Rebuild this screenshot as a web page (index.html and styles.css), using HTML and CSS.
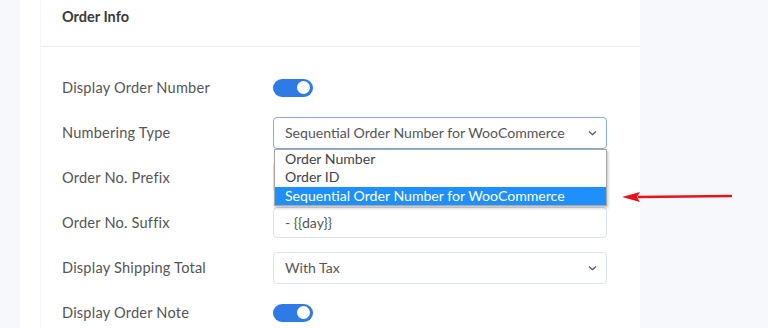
FILE: index.html
```html
<!DOCTYPE html>
<html>
<head>
    <meta charset="utf-8" />
    <meta name="viewport" content="width=device-width,initial-scale=1" />
    <title>Order Info</title>
    <link rel="stylesheet" href="styles.css">
</head>
<body>
    <div class="gutter"></div>
    <div class="panel">
        <div class="card">
            <div class="card-head">Order Info</div>
            <div class="rows">
                <div class="row">
                    <label>Display Order Number</label>
                    <span class="toggle on"><span class="knob"></span></span>
                </div>
                <div class="row">
                    <label>Numbering Type</label>
                    <div class="field select focus">
                        <span>Sequential Order Number for WooCommerce</span>
                        <svg class="chev" width="9" height="6" viewBox="0 0 9 6"><path d="M1 1.5l3.5 3.2 3.5-3.2" fill="none" stroke="#555" stroke-width="1.3"/></svg>
                        <ul class="options">
                            <li>Order Number</li>
                            <li>Order ID</li>
                            <li class="active">Sequential Order Number for WooCommerce</li>
                        </ul>
                    </div>
                </div>
                <div class="row">
                    <label>Order No. Prefix</label>
                    <div class="field"></div>
                </div>
                <div class="row">
                    <label>Order No. Suffix</label>
                    <div class="field"><span>- {{day}}</span></div>
                </div>
                <div class="row">
                    <label>Display Shipping Total</label>
                    <div class="field select">
                        <span>With Tax</span>
                        <svg class="chev" width="9" height="6" viewBox="0 0 9 6"><path d="M1 1.5l3.5 3.2 3.5-3.2" fill="none" stroke="#555" stroke-width="1.3"/></svg>
                    </div>
                </div>
                <div class="row">
                    <label>Display Order Note</label>
                    <span class="toggle on"><span class="knob"></span></span>
                </div>
            </div>
        </div>
    </div>
    <div class="aside"></div>

    <svg class="pointer" width="120" height="14" viewBox="0 0 120 14">
        <path d="M18 7 L112 6" stroke="#e8121a" stroke-width="2.4" fill="none"/>
        <path d="M2 7 L20 2 L17 7 L20 12 Z" fill="#e8121a"/>
    </svg>
</body>
</html>
```

FILE: styles.css
```css
* {margin: 0; padding: 0; box-sizing: border-box;}

body {
    display: flex;
    height: 328px;
    overflow: hidden;
    background: #f7f8fc;
    font-family: Lato, "Open Sans", sans-serif;
    color: #555;
}

.gutter {width: 20px; flex: none;}
.aside {flex: 1;}

.panel {
    width: 620px;
    flex: none;
    background: #fff;
    padding-left: 20px;
}

.card {border-left: 1px solid #f4f5f8;}

.card-head {
    height: 47px;
    padding: 7px 0 0 21px;
    font-size: 14.5px;
    font-weight: bold;
    line-height: 20px;
    color: #3a3a3a;
    border-bottom: 1px solid #eceef2;
}

.rows {padding-top: 18px;}

.row {
    display: flex;
    align-items: center;
    height: 45px;
    padding-left: 21px;
}

.row label {
    width: 211px;
    font-size: 14.6px;
    letter-spacing: 0.2px;
    color: #555;
}

.toggle {
    display: flex;
    align-items: center;
    justify-content: flex-end;
    width: 40px;
    height: 18px;
    padding: 0 3px;
    border-radius: 9px;
    background: #2f7be5;
}
.knob {
    width: 13px;
    height: 13px;
    border-radius: 50%;
    background: #fff;
}

.field {
    position: relative;
    display: flex;
    align-items: center;
    justify-content: space-between;
    width: 334px;
    height: 31px;
    padding: 0 9px 0 11px;
    border: 1px solid #dbe3ef;
    border-radius: 4px;
    font-size: 14.1px;
    color: #555;
}
.field.select {height: 32px;}
.field.focus {border-color: #86abd6;}
.chev {flex: none;}

.options {
    position: absolute;
    left: 0;
    top: 31px;
    width: 333px;
    list-style: none;
    background: #fff;
    border: 1px solid #a8a8a8;
    box-shadow: 1px 2px 3px rgba(0, 0, 0, 0.25);
    z-index: 2;
}
.options li {
    height: 18.5px;
    line-height: 18px;
    padding-left: 10px;
    font-size: 14.1px;
    color: #444;
}
.options li.active {
    background: #1e8ffb;
    color: #fff;
}

.pointer {
    position: absolute;
    left: 620px;
    top: 190px;
}
```
